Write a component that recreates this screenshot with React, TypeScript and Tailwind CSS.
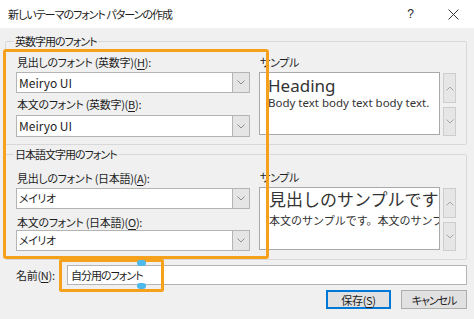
import React from "react";

const jp = "font-['Noto_Sans_CJK_JP',sans-serif] [font-feature-settings:'palt']";

function U({ children }: { children: React.ReactNode }) {
  return <span className="underline underline-offset-[2px] decoration-[1px]">{children}</span>;
}

function Chevron({ up = false, color = "#8c8c8c" }: { up?: boolean; color?: string }) {
  return (
    <svg width="8" height="5" viewBox="0 0 8 5">
      <path d={up ? "M0.5 4.5 L4 1 L7.5 4.5" : "M0.5 0.5 L4 4 L7.5 0.5"} fill="none" stroke={color} strokeWidth="1" />
    </svg>
  );
}

function Combo({ value, h = 21, jpText = false }: { value: string; h?: number; jpText?: boolean }) {
  return (
    <div className={`flex w-[234px] border border-[#b4b4b4] bg-white ${h === 22 ? "h-[22px]" : "h-[21px]"}`}>
      <div
        className={`flex flex-1 items-center pl-[2px] text-[#1e1e1e] ${
          jpText ? "text-[11px] tracking-[-0.5px]" : "text-[12px]"
        }`}
      >
        {value}
      </div>
      <div className="flex w-[17px] items-center justify-center border-l border-[#b4b4b4] bg-[#e5e5e5]">
        <Chevron />
      </div>
    </div>
  );
}

function ScrollCol() {
  return (
    <div className="ml-[3px] flex w-[13px] flex-col gap-[4px] pt-[1px]">
      <div className="flex h-[30px] items-center justify-center border border-[#cdcdcd] bg-[#e6e6e6]">
        <Chevron up color="#a6a6a6" />
      </div>
      <div className="flex h-[29px] items-center justify-center border border-[#cdcdcd] bg-[#e6e6e6]">
        <Chevron color="#a6a6a6" />
      </div>
    </div>
  );
}

const label = "h-[16px] pl-[1px] text-[11px] leading-[16px] tracking-[-0.3px] whitespace-nowrap";
const legend = "-ml-[2px] px-[1px] text-[11px] leading-[16px] tracking-[-1px]";

export default function App() {
  return (
    <div className={`relative h-[319px] w-[474px] overflow-hidden bg-[#f0f0f0] text-[#1e1e1e] ${jp}`}>
      {/* Title bar */}
      <div className="flex h-[28px] items-center bg-white pl-[8px]">
        <div className="text-[11px] leading-[16px] tracking-[-1px]">新しいテーマのフォント パターンの作成</div>
        <div className="ml-auto flex items-center">
          <span className="mr-[34px] text-[12px] font-['Liberation_Sans',sans-serif]">?</span>
          <svg width="11" height="11" viewBox="0 0 11 11" className="mr-[15px]">
            <path d="M0.5 0.5 L10.5 10.5 M10.5 0.5 L0.5 10.5" stroke="#333" strokeWidth="1" />
          </svg>
        </div>
      </div>

      {/* Group 1 */}
      <fieldset className="ml-[5px] mr-[7px] mt-[5px] rounded-[2px] border border-[#d8d8d8] px-[10px] pb-[7px]">
        <legend className={legend}>英数字用のフォント</legend>
        <div className="flex pt-[5px]">
          <div className="flex w-[234px] flex-col">
            <div className={label}>
              見出しのフォント (英数字)(<U>H</U>):
            </div>
            <div className="mt-[2px]">
              <Combo value="Meiryo UI" />
            </div>
            <div className={`mt-[3px] ${label}`}>
              本文のフォント (英数字)(<U>B</U>):
            </div>
            <div className="mt-[3px]">
              <Combo value="Meiryo UI" h={22} />
            </div>
          </div>
          <div className="ml-[9px] flex flex-col">
            <div className={label}>サンプル</div>
            <div className="mt-[2px] flex">
              <div className="h-[63px] w-[181px] overflow-hidden border border-[#a9a9a9] bg-white pl-[8px] pt-[3px] font-['Noto_Sans',sans-serif] text-[#333]">
                <div className="whitespace-nowrap text-[17px] leading-[20px]">Heading</div>
                <div className="whitespace-nowrap text-[11.5px] leading-[14px]">Body text body text body text.</div>
              </div>
              <ScrollCol />
            </div>
          </div>
        </div>
      </fieldset>

      {/* Group 2 */}
      <fieldset className="ml-[5px] mr-[7px] mt-[1px] rounded-[2px] border border-[#d8d8d8] px-[10px] pb-[8px]">
        <legend className={legend}>日本語文字用のフォント</legend>
        <div className="flex">
          <div className="flex w-[234px] flex-col pt-[8px]">
            <div className={label}>
              見出しのフォント (日本語)(<U>A</U>):
            </div>
            <div className="mt-[2px]">
              <Combo value="メイリオ" jpText />
            </div>
            <div className={`mt-[5px] ${label}`}>
              本文のフォント (日本語)(<U>O</U>):
            </div>
            <div>
              <Combo value="メイリオ" jpText />
            </div>
          </div>
          <div className="ml-[9px] flex flex-col pt-[7px]">
            <div className={label}>サンプル</div>
            <div className="mt-[2px] flex">
              <div className="h-[63px] w-[181px] overflow-hidden border border-[#a9a9a9] bg-white pl-[9px] pt-[1px] font-['Noto_Sans_CJK_JP',sans-serif] [font-feature-settings:normal] text-[#333]">
                <div className="whitespace-nowrap text-[17px] leading-[20px]">見出しのサンプルです</div>
                <div className="mt-[4px] whitespace-nowrap text-[11px] leading-[14px]">本文のサンプルです。本文のサンプルです。</div>
              </div>
              <ScrollCol />
            </div>
          </div>
        </div>
      </fieldset>

      {/* Name row */}
      <div className="mt-[5px] flex items-center pl-[16px]">
        <div className="w-[51px] whitespace-nowrap text-[11px] leading-[16px] tracking-[-0.3px]">
          名前(<U>N</U>):
        </div>
        <div className="flex h-[20px] w-[400px] items-center border border-[#b4b4b4] bg-white pl-[3px] text-[11px] tracking-[-1px]">
          自分用のフォント
        </div>
      </div>

      {/* Buttons */}
      <div className="mt-[5px] flex justify-end gap-[10px] pr-[7px]">
        <button className="flex h-[19px] w-[65px] items-center justify-center border border-[#0078d7] bg-[#e1e1e1] text-[11px] leading-[16px] tracking-[-0.3px] shadow-[inset_0_0_0_1px_#0078d7]">
          保存(<U>S</U>)
        </button>
        <button className="flex h-[19px] w-[66px] items-center justify-center border border-[#adadad] bg-[#e1e1e1] text-[11px] leading-[16px] tracking-[-1px]">
          キャンセル
        </button>
      </div>

      {/* Annotation overlays */}
      <div className="pointer-events-none absolute left-[3px] top-[49px] h-[210px] w-[266px] rounded-[3px] border-[3px] border-[#f5a11c]" />
      <div className="pointer-events-none absolute left-[59px] top-[259px] h-[33px] w-[105px] rounded-[2px] border-[3px] border-[#f5a11c]" />
      <div className="pointer-events-none absolute left-[137px] top-[260px] h-[6px] w-[9px] rounded-full bg-[#4db8ec]" />
      <div className="pointer-events-none absolute left-[137px] top-[283px] h-[6px] w-[9px] rounded-full bg-[#4db8ec]" />
    </div>
  );
}
